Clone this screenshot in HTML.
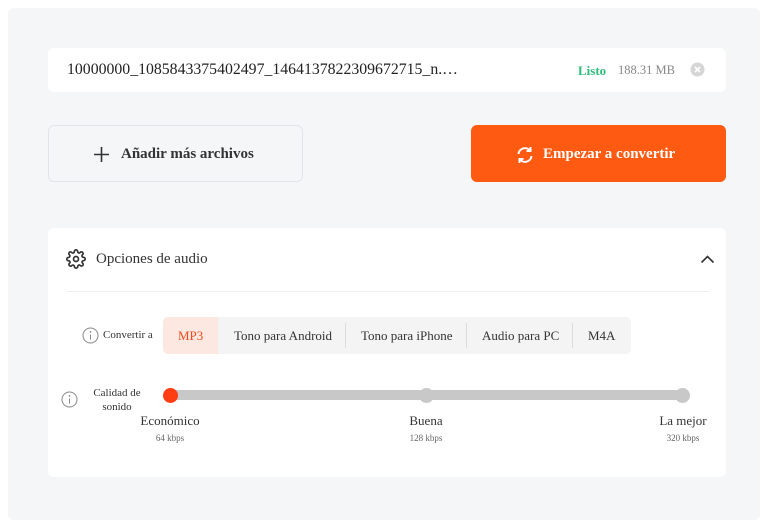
<!DOCTYPE html>
<html><head><meta charset="utf-8"><style>
*{box-sizing:border-box;margin:0;padding:0}
body{width:768px;height:529px;background:#fff;font-family:"Liberation Serif",serif;color:#222;position:relative;overflow:hidden}
.panel{position:absolute;left:8px;top:8px;width:752px;height:512px;background:#f5f6f8;border-radius:6px}
.abs{position:absolute}
.card{background:#fff;border-radius:6px}
</style></head><body>
<div class="panel"></div>
<div class="abs card" style="left:48px;top:48px;width:678px;height:44px"></div>
<div class="abs" style="left:67px;top:61px;font-size:15.8px">10000000_1085843375402497_1464137822309672715_n.…</div>
<div class="abs" style="left:578px;top:63px;font-size:13px;color:#2ebd7a;font-weight:bold">Listo</div>
<div class="abs" style="left:618px;top:63px;font-size:12.5px;color:#888">188.31 MB</div>
<svg class="abs" style="left:690px;top:62px" width="15" height="15" viewBox="0 0 15 15"><circle cx="7.5" cy="7.5" r="7" fill="#d6d6d6"/><path d="M5 5L10 10M10 5L5 10" stroke="#fff" stroke-width="1.6"/></svg>

<div class="abs" style="left:48px;top:125px;width:255px;height:57px;background:#f5f6f8;border:1px solid #e2e4e8;border-radius:6px"></div>
<svg class="abs" style="left:93px;top:146px" width="17" height="17"><path d="M8.5 1V16M1 8.5H16" stroke="#333" stroke-width="1.6"/></svg>
<div class="abs" style="left:121px;top:146px;font-size:15px;font-weight:bold;color:#333">Añadir más archivos</div>

<div class="abs" style="left:471px;top:125px;width:255px;height:57px;background:#ff5a12;border-radius:6px"></div>
<svg class="abs" style="left:515px;top:145px" width="20" height="20" viewBox="0 0 20 20" fill="none" stroke="#fff" stroke-width="2"><path d="M3.5 9A6.5 6.5 0 0 1 15 5.5M16.5 11A6.5 6.5 0 0 1 5 14.5"/><path d="M15.5 2V6H11.5M4.5 18V14H8.5"/></svg>
<div class="abs" style="left:543px;top:146px;font-size:15px;font-weight:bold;color:#fff">Empezar a convertir</div>

<div class="abs card" style="left:48px;top:228px;width:678px;height:249px"></div>
<svg class="abs" style="left:66px;top:249px" width="20" height="20" viewBox="0 0 24 24" fill="none" stroke="#333" stroke-width="2"><circle cx="12" cy="12" r="3"/><path d="M19.4 15a1.7 1.7 0 0 0 .3 1.8l.1.1a2 2 0 1 1-2.8 2.8l-.1-.1a1.7 1.7 0 0 0-1.8-.3 1.7 1.7 0 0 0-1 1.5V21a2 2 0 1 1-4 0v-.1a1.7 1.7 0 0 0-1.1-1.5 1.7 1.7 0 0 0-1.8.3l-.1.1a2 2 0 1 1-2.8-2.8l.1-.1a1.7 1.7 0 0 0 .3-1.8 1.7 1.7 0 0 0-1.500-1H3a2 2 0 1 1 0-4h.1a1.7 1.7 0 0 0 1.5-1.1 1.7 1.7 0 0 0-.3-1.8l-.1-.1a2 2 0 1 1 2.8-2.8l.1.1a1.7 1.7 0 0 0 1.8.3H9a1.7 1.7 0 0 0 1-1.5V3a2 2 0 1 1 4 0v.1a1.7 1.7 0 0 0 1 1.5 1.7 1.7 0 0 0 1.8-.3l.1-.1a2 2 0 1 1 2.8 2.8l-.1.1a1.7 1.7 0 0 0-.3 1.8V9a1.7 1.7 0 0 0 1.5 1H21a2 2 0 1 1 0 4h-.1a1.7 1.7 0 0 0-1.5 1z"/></svg>
<div class="abs" style="left:96px;top:251px;font-size:15px;color:#333">Opciones de audio</div>
<svg class="abs" style="left:700px;top:254px" width="15" height="10"><path d="M1.5 8.5L7.5 2.5L13.5 8.5" stroke="#333" stroke-width="1.6" fill="none"/></svg>
<div class="abs" style="left:67px;top:291px;width:642px;height:1px;background:#eceef1"></div>

<svg class="abs" style="left:82px;top:327px" width="17" height="17"><circle cx="8.5" cy="8.5" r="7.5" fill="none" stroke="#888" stroke-width="1"/><path d="M8.5 7.5V12.5" stroke="#888"/><circle cx="8.5" cy="5" r=".9" fill="#888"/></svg>
<div class="abs" style="left:103px;top:329px;font-size:11px;color:#333">Convertir a</div>
<div class="abs" style="left:163px;top:317px;width:468px;height:37px;background:#f4f4f5;border-radius:5px"></div>
<div class="abs" style="left:163px;top:317px;width:55px;height:37px;background:#fde8e1;border-radius:5px 0 0 5px"></div>
<div class="abs" style="left:178px;top:328px;font-size:13px;color:#f04a1c">MP3</div>
<div class="abs" style="left:234px;top:328px;font-size:13px;color:#333">Tono para Android</div>
<div class="abs" style="left:345px;top:323px;width:1px;height:25px;background:#ddd"></div>
<div class="abs" style="left:361px;top:328px;font-size:13px;color:#333">Tono para iPhone</div>
<div class="abs" style="left:466px;top:323px;width:1px;height:25px;background:#ddd"></div>
<div class="abs" style="left:482px;top:328px;font-size:13px;color:#333">Audio para PC</div>
<div class="abs" style="left:572px;top:323px;width:1px;height:25px;background:#ddd"></div>
<div class="abs" style="left:588px;top:328px;font-size:13px;color:#333">M4A</div>

<svg class="abs" style="left:61px;top:391px" width="17" height="17"><circle cx="8.5" cy="8.5" r="7.5" fill="none" stroke="#888" stroke-width="1"/><path d="M8.5 7.5V12.5" stroke="#888"/><circle cx="8.5" cy="5" r=".9" fill="#888"/></svg>
<div class="abs" style="left:87px;top:386px;width:60px;font-size:11px;line-height:14px;text-align:center;color:#333">Calidad de sonido</div>
<div class="abs" style="left:170px;top:390px;width:513px;height:10px;background:#c8c8c8;border-radius:5px"></div>
<div class="abs" style="left:163px;top:388px;width:15px;height:15px;border-radius:50%;background:#ff3d12"></div>
<div class="abs" style="left:419px;top:388px;width:15px;height:15px;border-radius:50%;background:#c8c8c8"></div>
<div class="abs" style="left:675px;top:388px;width:15px;height:15px;border-radius:50%;background:#c8c8c8"></div>
<div class="abs" style="left:110px;top:413px;width:120px;text-align:center;font-size:13px;color:#333">Económico</div>
<div class="abs" style="left:110px;top:433px;width:120px;text-align:center;font-size:9px;color:#666">64 kbps</div>
<div class="abs" style="left:366px;top:413px;width:120px;text-align:center;font-size:13px;color:#333">Buena</div>
<div class="abs" style="left:366px;top:433px;width:120px;text-align:center;font-size:9px;color:#666">128 kbps</div>
<div class="abs" style="left:623px;top:413px;width:120px;text-align:center;font-size:13px;color:#333">La mejor</div>
<div class="abs" style="left:623px;top:433px;width:120px;text-align:center;font-size:9px;color:#666">320 kbps</div>
</body></html>
